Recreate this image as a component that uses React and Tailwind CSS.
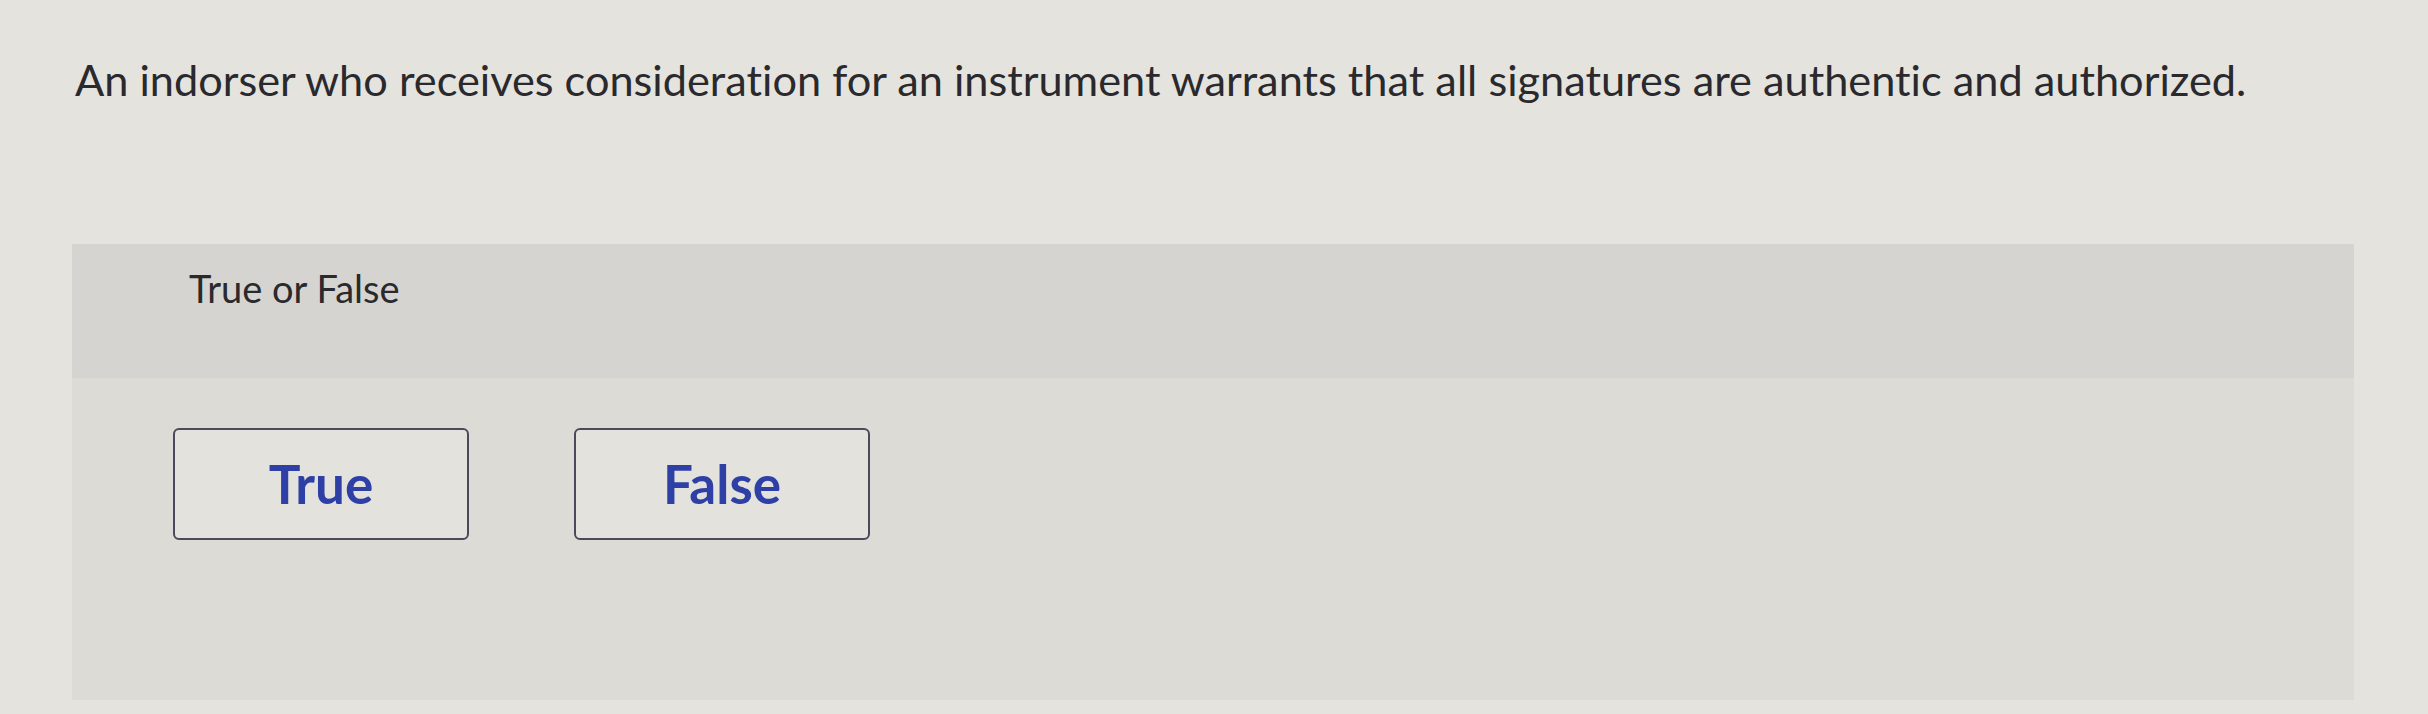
import React from 'react';

const ChoiceButton = ({ label }) => (
  <button
    type="button"
    className="flex h-[112px] w-[296px] items-center justify-center rounded-[6px] border-2 border-[#4a4a5b] bg-[#e3e2dd] text-[53px] font-bold text-[#2e3fa6]"
  >
    {label}
  </button>
);

export default function App() {
  return (
    <div
      className="flex h-[714px] w-[2428px] flex-col overflow-hidden bg-[#e4e3de] text-[#2a292d] [font-variant-ligatures:none]"
      style={{ fontFamily: 'Lato, "Open Sans", sans-serif' }}
    >
      {/* question stem */}
      <p className="pl-[75px] pt-[54px] text-[43.3px] leading-[50px]">
        An indorser who receives consideration for an instrument warrants that all signatures are authentic and authorized.
      </p>

      {/* answer panel */}
      <div className="ml-[72px] mr-[74px] mt-[140px] flex h-[456px] flex-col bg-[#dcdbd6]">
        <div className="h-[134px] bg-[#d5d4d0] pl-[117px] pt-[22px]">
          <span className="text-[38px] leading-[44px]">True or False</span>
        </div>
        <div className="flex gap-[105px] pl-[101px] pt-[50px]">
          <ChoiceButton label="True" />
          <ChoiceButton label="False" />
        </div>
      </div>
    </div>
  );
}
